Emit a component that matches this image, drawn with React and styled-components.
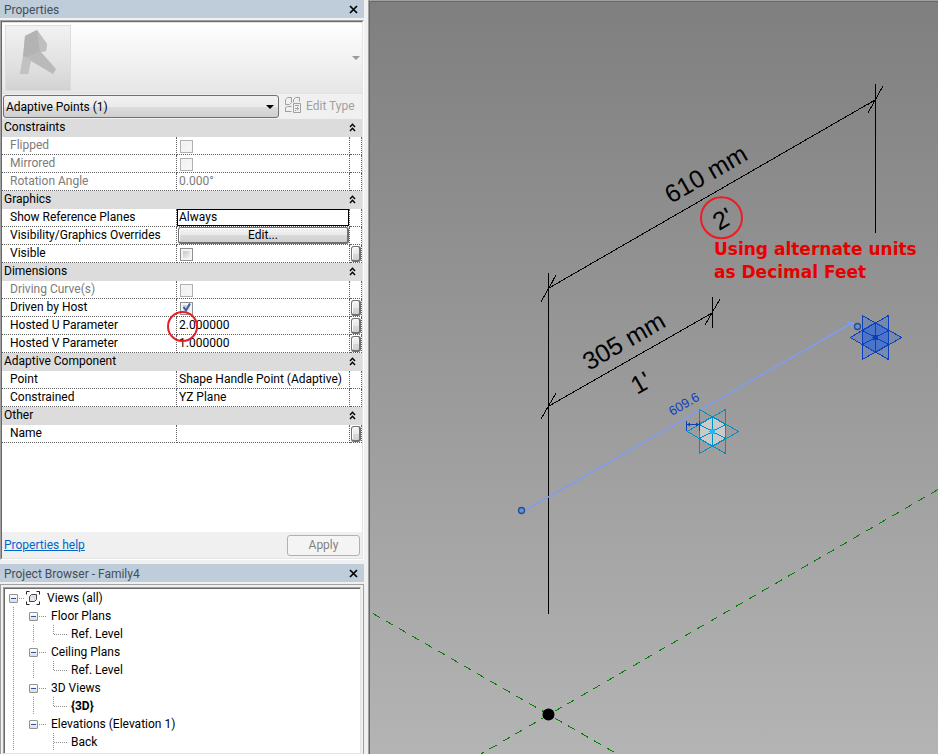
import React from "react";
import styled, { createGlobalStyle, css } from "styled-components";

const uiFont = 'Roboto, "Noto Sans", sans-serif';

const GlobalStyle = createGlobalStyle`
  *, *::before, *::after { box-sizing: border-box; }
  body { margin: 0; background: #f0f0f0; font: 12px/18px ${uiFont}; color: #000; }
  button, input, select { font: inherit; color: inherit; margin: 0; padding: 0; }
`;

const Workspace = styled.div`
  display: flex;
  gap: 4px;
  height: 100vh;
  overflow: hidden;
`;

const Dock = styled.aside`
  flex: 0 0 364px;
  display: flex;
  flex-direction: column;
  gap: 4px;
  min-height: 0;
`;

const Panel = styled.section`
  display: flex;
  flex-direction: column;
  gap: 2px;
  ${(p) => (p.$fill ? "flex: 1 1 0; min-height: 0; overflow: hidden;" : "flex: none;")}
`;

const TitleBar = styled.header`
  display: flex;
  align-items: center;
  justify-content: space-between;
  height: 18px;
  padding: 0 5px 0 4px;
  background: #bfcddb;
  color: #434e5a;
`;

const Title = styled.h2`
  margin: 0;
  padding-top: 2px;
  font-size: 12px;
  font-weight: 400;
`;

const IconButton = styled.button`
  display: flex;
  align-items: center;
  justify-content: center;
  width: 12px;
  height: 14px;
  border: 0;
  background: none;
  color: #000;
`;

const SunkenFrame = styled.div`
  border: 1px solid;
  border-color: #a0a0a0 #fff #fff #a0a0a0;
`;

const SunkenInner = styled.div`
  display: flex;
  flex-direction: column;
  border: 1px solid;
  border-color: #696969 #e3e3e3 #e3e3e3 #696969;
`;

const TypeHeader = styled.div`
  display: flex;
  align-items: center;
  justify-content: space-between;
  height: 72px;
  padding: 2px 0 2px 3px;
  border: 1px solid #e2e2e2;
  border-width: 1px 0;
  background: linear-gradient(#fff, #e6e6e6);
`;

const Thumbnail = styled.svg`
  width: 66px;
  height: 66px;
  border: 1px solid #ddd;
`;

const TypeRow = styled.div`
  display: flex;
  align-items: center;
  gap: 4px;
  height: 25px;
  padding-left: 1px;
`;

const SelectShell = styled.div`
  position: relative;
  width: 276px;

  svg {
    position: absolute;
    right: 5px;
    top: 10px;
    pointer-events: none;
  }
`;

const TypeSelect = styled.select`
  appearance: none;
  width: 100%;
  height: 23px;
  padding: 0 18px 0 2px;
  border: 1px solid #707070;
  border-radius: 3px;
  background: linear-gradient(#f2f2f2, #ebebeb 50%, #ddd 51%, #cfcfcf);
`;

const EditTypeButton = styled.button`
  display: flex;
  align-items: center;
  gap: 4px;
  height: 22px;
  padding: 0 0 2px 2px;
  border: 0;
  background: none;
  color: #a0a0a0;
  &:disabled { color: #a0a0a0; }
`;

const GridArea = styled.div`
  min-height: 413px;
  background: #fff;
`;

const PropertyTable = styled.table`
  width: 100%;
  table-layout: fixed;
  border-spacing: 0;

  td, th { height: 18px; padding: 0; font-weight: 400; text-align: left; line-height: 17px; }
`;

const NameCol = styled.col` width: 175px; `;
const ButtonCol = styled.col` width: 12px; `;

const SectionCell = styled.th`
  background: #dcdcdc;
`;

const SectionBar = styled.div`
  display: flex;
  align-items: center;
  justify-content: space-between;
  height: 18px;
  padding: 0 4px 1px 2px;
`;

const NameCell = styled.th`
  border: 0 dotted #606060;
  border-width: 0 1px 1px 0;

  label { display: block; height: 17px; padding-left: 8px; line-height: 16px; color: ${(p) => (p.$dim ? "#7c7c7c" : "#000")}; }
`;

const ValueCell = styled.td`
  position: relative;
  border: 0 dotted #606060;
  border-width: 0 1px 1px 0;
`;

const ValueInput = styled.input`
  display: block;
  width: 100%;
  height: 17px;
  padding: 0 0 1px 2px;
  border: 0;
  background: none;
  outline: 0;
  line-height: 16px;
  &:disabled { color: #7c7c7c; }
`;

const ValueSelect = styled.select`
  appearance: none;
  display: block;
  width: 100%;
  height: 17px;
  padding: 0 0 1px 1px;
  border: 1px solid #000;
  border-radius: 0;
  background: #fff;
  line-height: 14px;
`;

const raised = css`
  border: 1px solid #707070;
  border-width: 1px 2px 2px 1px;
  border-radius: 3px;
  background: linear-gradient(#f4f4f4, #e9e9e9 50%, #dadada 51%, #d0d0d0);
  box-shadow: inset 1px 1px 0 #fff;
`;

const EditButton = styled.button`
  ${raised}
  display: block;
  width: calc(100% - 1px);
  height: 17px;
  margin-left: 1px;
  line-height: 14px;
`;

const AssociateButton = styled.button`
  ${raised}
  display: block;
  width: 10px;
  height: 16px;
  margin-left: 1px;
`;

const Check = styled.input`
  appearance: none;
  display: block;
  width: 13px;
  height: 13px;
  margin: 2px 0 0 3px;
  border: 1px solid #8e8f8f;
  background: linear-gradient(135deg, #b4bac8, #f0f2f4 80%);
  box-shadow: inset 0 0 0 2px #f4f4f4;
  &:disabled { border-color: #b1b1b1; background: linear-gradient(135deg, #ededed, #fbfbfb); }
`;

const CheckMark = styled.svg`
  position: absolute;
  left: 4px;
  top: 3px;
  pointer-events: none;
`;

const Callout = styled.span`
  position: absolute;
  z-index: 1;
  left: -10px;
  top: -6px;
  width: 31px;
  height: 31px;
  border: 2px solid #ed1c24;
  border-radius: 50%;
  pointer-events: none;
`;

const Footer = styled.footer`
  display: flex;
  align-items: center;
  justify-content: space-between;
  height: 26px;
  padding: 0 2px;
  background: #f0f0f0;
`;

const HelpLink = styled.a`
  color: #0066cc;
  text-decoration: underline;
`;

const ApplyButton = styled.button`
  width: 73px;
  height: 21px;
  border: 1px solid #adb2b5;
  border-radius: 3px;
  background: #f4f4f4;
  &:disabled { color: #838383; }
`;

const BrowserFrame = styled.div`
  flex: 1;
  min-height: 0;
  padding: 2px 2px 0;
  border: 1px solid #a0a0a0;
  border-bottom: 0;
  overflow: hidden;
`;

const BrowserInner = styled.div`
  height: 100%;
  border: 1px solid;
  border-color: #a0a0a0 #e3e3e3 #e3e3e3 #a0a0a0;
  overflow: hidden;
`;

const Tree = styled.ul`
  height: 100%;
  margin: 0;
  padding: 0;
  border: 1px solid #696969;
  border-width: 1px 0 0 1px;
  background: #fff;
  list-style: none;
  overflow: hidden;
`;

const TreeRow = styled.li`
  display: flex;
  align-items: center;
  height: 18px;
  font-weight: ${(p) => (p.$bold ? 700 : 400)};
`;

const Guide = styled.svg`
  flex: none;
  width: ${(p) => p.$w}px;
  height: 18px;
`;

const Twisty = styled.button`
  display: block;
  width: 9px;
  height: 9px;
  margin-top: 1px;
  flex: none;
  border: 1px solid #919191;
  border-radius: 1px;
  background: linear-gradient(#fff, #ddd);

  &::before { content: ""; display: block; width: 5px; height: 1px; margin: 0 auto; background: #2f4fa0; }
`;

const Viewport = styled.main`
  flex: 1;
  min-width: 0;
  border: 1px solid #a0a0a0;
  border-width: 1px 0 0 1px;
  box-shadow: inset 1px 1px 0 #696969;
  background: linear-gradient(#7f7f7f, #b4b4b4);
`;

const Scene = styled.svg`
  display: block;
  width: 100%;
  height: 100%;
`;

const CloseIcon = () => (
  <svg width="9" height="9" viewBox="0 0 9 9" stroke="currentColor" strokeWidth="1.7" aria-hidden="true">
    <path d="M1 1 8 8M8 1 1 8" />
  </svg>
);

const CollapseIcon = () => (
  <svg width="7" height="9" viewBox="0 0 7 9" fill="none" stroke="currentColor" strokeWidth="1.4" aria-hidden="true">
    <path d="M1 4 3.5 1.3 6 4M1 8 3.5 5.3 6 8" />
  </svg>
);

const DownArrow = ({ color }) => (
  <svg width="8" height="4" viewBox="0 0 8 4" fill={color} aria-hidden="true">
    <path d="M0 0H8L4 4Z" />
  </svg>
);

const EditTypeIcon = () => (
  <svg width="17" height="17" viewBox="0 0 17 17" fill="none" stroke="#a0a0a0" aria-hidden="true">
    <path d="M.5 7.5V2.5L2.5.5H6.5V5.5L4.5 7.5ZM8.5 5.5V2.5L10.5.5H14.5V4.5M.5 15V10.5L2.5 9.5H6.5M.5 14.5H6.5" />
    <path d="M8.5 6.5H15.5V15.5H8.5ZM10 8.5H14M10 11.5H13.5M12 10 13.5 11.5 12 13.5M10 13.5H11" />
  </svg>
);

const ViewsIcon = () => (
  <svg width="14" height="14" viewBox="0 0 14 14" fill="none" aria-hidden="true">
    <path d="M.5 3.5V.5H3.5M10.5.5H13.5V3.5M13.5 10.5V13.5H10.5M3.5 13.5H.5V10.5" stroke="#222" />
    <path d="M3.5 5.5 5.5 3.5H10.5V8.5L8.5 10.5H3.5Z" fill="#e4e8ef" stroke="#444" />
    <path d="M4 5.5H8.5V10" stroke="#d3d7df" />
  </svg>
);

const sections = [
  ["Constraints", [
    { name: "Flipped", kind: "check", dim: true },
    { name: "Mirrored", kind: "check", dim: true },
    { name: "Rotation Angle", kind: "text", value: "0.000°", dim: true },
  ]],
  ["Graphics", [
    { name: "Show Reference Planes", kind: "select", value: "Always" },
    { name: "Visibility/Graphics Overrides", kind: "button", value: "Edit..." },
    { name: "Visible", kind: "check", assoc: true },
  ]],
  ["Dimensions", [
    { name: "Driving Curve(s)", kind: "check", dim: true },
    { name: "Driven by Host", kind: "check", checked: true, assoc: true },
    { name: "Hosted U Parameter", kind: "text", value: "2.000000", assoc: true, marked: true },
    { name: "Hosted V Parameter", kind: "text", value: "1.000000", assoc: true },
  ]],
  ["Adaptive Component", [
    { name: "Point", kind: "text", value: "Shape Handle Point (Adaptive)" },
    { name: "Constrained", kind: "text", value: "YZ Plane" },
  ]],
  ["Other", [{ name: "Name", kind: "text", value: "", assoc: true }]],
];

function PropertyValue({ id, row }) {
  if (row.kind === "check")
    return (
      <>
        <Check id={id} type="checkbox" defaultChecked={row.checked} disabled={row.dim} />
        {row.checked && (
          <CheckMark width="11" height="11" viewBox="0 0 11 11" fill="none" stroke="#3a5eaa" strokeWidth="2">
            <path d="M2.5 5 5 8.5 9 1.5" />
          </CheckMark>
        )}
      </>
    );
  if (row.kind === "select")
    return <ValueSelect id={id}><option>{row.value}</option></ValueSelect>;
  if (row.kind === "button") return <EditButton id={id} type="button">{row.value}</EditButton>;
  return <ValueInput id={id} type="text" defaultValue={row.value} disabled={row.dim} />;
}

function PropertyRow({ row }) {
  const id = "prop-" + row.name.toLowerCase().replace(/[^a-z]+/g, "-");
  return (
    <tr>
      <NameCell scope="row" $dim={row.dim}><label htmlFor={id}>{row.name}</label></NameCell>
      <ValueCell>
        <PropertyValue id={id} row={row} />
        {row.marked && <Callout />}
      </ValueCell>
      <ValueCell>
        {row.assoc && <AssociateButton type="button" aria-label={`Associate ${row.name}`} />}
      </ValueCell>
    </tr>
  );
}

function PropertiesPanel() {
  return (
    <Panel>
      <TitleBar>
        <Title>Properties</Title>
        <IconButton type="button" aria-label="Close Properties"><CloseIcon /></IconButton>
      </TitleBar>
      <SunkenFrame>
        <SunkenInner>
          <TypeHeader>
            <Thumbnail viewBox="0 0 64 64" aria-hidden="true">
              <defs>
                <linearGradient id="thumb" x1="0" y1="0" x2="0" y2="1">
                  <stop offset="0" stopColor="#f2f2f2" />
                  <stop offset=".7" stopColor="#dedede" />
                  <stop offset="1" stopColor="#d2d2d2" />
                </linearGradient>
              </defs>
              <rect width="64" height="64" fill="url(#thumb)" />
              <path d="M19 10 31 4 41 18 40 25 35 26 50 43 47 48 25 35 22 48H14L17 32Z" fill="#bababa" />
              <path d="M19 10 31 4 34 25 17 32Z" fill="#b3b3b3" />
              <path d="M31 4 41 18 40 25 34 26Z" fill="#bfbfbf" />
              <path d="M17 30 25 34 22 48H14Z" fill="#c2c2c2" />
            </Thumbnail>
            <IconButton type="button" aria-label="Choose type"><DownArrow color="#9a9a9a" /></IconButton>
          </TypeHeader>
          <TypeRow>
            <SelectShell>
              <TypeSelect aria-label="Selection"><option>Adaptive Points (1)</option></TypeSelect>
              <DownArrow color="#000" />
            </SelectShell>
            <EditTypeButton type="button" disabled><EditTypeIcon />Edit Type</EditTypeButton>
          </TypeRow>
          <GridArea>
            <PropertyTable>
              <colgroup><NameCol /><col /><ButtonCol /></colgroup>
              {sections.map(([title, rows]) => (
                <tbody key={title}>
                  <tr>
                    <SectionCell colSpan={3} scope="rowgroup">
                      <SectionBar>
                        {title}
                        <IconButton type="button" aria-label={`Collapse ${title}`}><CollapseIcon /></IconButton>
                      </SectionBar>
                    </SectionCell>
                  </tr>
                  {rows.map((row) => <PropertyRow key={row.name} row={row} />)}
                </tbody>
              ))}
            </PropertyTable>
          </GridArea>
          <Footer>
            <HelpLink href="#help">Properties help</HelpLink>
            <ApplyButton type="button" disabled>Apply</ApplyButton>
          </Footer>
        </SunkenInner>
      </SunkenFrame>
    </Panel>
  );
}

const views = [
  { level: 1, label: "Floor Plans" },
  { level: 2, label: "Ref. Level", last: true },
  { level: 1, label: "Ceiling Plans" },
  { level: 2, label: "Ref. Level", last: true },
  { level: 1, label: "3D Views" },
  { level: 2, label: "{3D}", bold: true, last: true },
  { level: 1, label: "Elevations (Elevation 1)", lastGroup: true },
  { level: 2, label: "Back", underLast: true },
];

const dots = { stroke: "#909090", strokeDasharray: "1 1", fill: "none" };

function ViewRow({ view }) {
  if (view.level === 1)
    return (
      <TreeRow>
        <Guide $w={24}>
          <path d="M8.5 0V18" {...dots} />
        </Guide>
        <Twisty type="button" aria-label={`Collapse ${view.label}`} />
        <Guide $w={13}><path d="M1 9.5H9" {...dots} /></Guide>
        {view.label}
      </TreeRow>
    );
  return (
    <TreeRow $bold={view.bold}>
      <Guide $w={66}>
        <path d={`M8.5 0V18${view.underLast ? "" : "M28.5 0V18"}M48.5 0V${view.last ? 10 : 18}M49 9.5H63`} {...dots} />
      </Guide>
      {view.label}
    </TreeRow>
  );
}

function ProjectBrowser() {
  return (
    <Panel $fill>
      <TitleBar>
        <Title>Project Browser - Family4</Title>
        <IconButton type="button" aria-label="Close Project Browser"><CloseIcon /></IconButton>
      </TitleBar>
      <BrowserFrame>
        <BrowserInner>
          <Tree>
            <TreeRow>
              <Guide $w={4} />
              <Twisty type="button" aria-label="Collapse Views" />
              <Guide $w={8}><path d="M1 9.5H7" {...dots} /></Guide>
              <ViewsIcon />
              <Guide $w={7} />
              Views (all)
            </TreeRow>
            {views.map((v, i) => <ViewRow key={i} view={v} />)}
          </Tree>
        </BrowserInner>
      </BrowserFrame>
    </Panel>
  );
}

function PointPlanes({ x, y, stroke, fill, core, dot }) {
  return (
    <g transform={`translate(${x} ${y})`} stroke={stroke} fill={fill} shapeRendering="crispEdges">
      <path d="M0-15 13-7V7L0 15-13 7V-7Z" fill={core} stroke="none" />
      <path d="M-25 0 0-15 26 0 0 15Z" />
      <path d="M-13-22 13-7V22L-13 7Z" />
      <path d="M13-22-13-7V22L13 7Z" />
      <path d="M0-15V15M-13-7 13 7M13-7-13 7" />
      <circle r="3" fill={dot} stroke="none" />
    </g>
  );
}

function DimensionText({ x, y, size = 25, fill = "#000", children }) {
  return (
    <text transform={`translate(${x} ${y}) rotate(-30)`} fontFamily='"Liberation Sans", Arial, sans-serif' fontSize={size} fill={fill}>
      {children}
    </text>
  );
}

function ModelView() {
  return (
    <Viewport>
      <Scene viewBox="369 1 569 753" preserveAspectRatio="xMidYMid slice" role="img" aria-label="3D view">
        <g stroke="#008000" strokeDasharray="8 7" shapeRendering="crispEdges">
          <path d="M373 613.5 618 754.5" />
          <path d="M938 489.5 480 754.5" />
        </g>
        <circle cx="548.5" cy="714.5" r="6" />
        <g stroke="#000" fill="none" shapeRendering="crispEdges">
          <path d="M548.5 273V614M875.5 84V233M712.5 297V328" />
          <path d="M549 288 875 100M549 406 712 313" />
          <path d="M541 302 556 275M868 113 883 86M541 419 556 393M705 325 720 299" />
          <path d="M549 288 554 279M875 100 867 105" />
        </g>
        <DimensionText x={671} y={204}>610 mm</DimensionText>
        <DimensionText x={719} y={231}>2'</DimensionText>
        <DimensionText x={589} y={371}>305 mm</DimensionText>
        <DimensionText x={637} y={395}>1'</DimensionText>
        <path d="M524 511 852 323" stroke="#7f9df0" strokeWidth="1.5" />
        <path d="M847 322 853 323 851 328" stroke="#7f9df0" strokeWidth="1.5" fill="none" />
        <PointPlanes x={712.5} y={431.5} stroke="#0090c8" fill="none" core="#cacaca" dot="#19baf5" />
        <PointPlanes x={875.5} y={337.5} stroke="#0a3fc0" fill="#2f66dc48" core="#2f66dc30" dot="#0a3fc0" />
        <path d="M686.5 421V431M699.5 421V431M687 424.5H699" stroke="#0a3fc0" />
        <path d="M687 424.5 690 422.5V426.5ZM699 424.5 696 422.5V426.5Z" fill="#0a3fc0" />
        <DimensionText x={672} y={416} size={13} fill="#0a3fc0">609.6</DimensionText>
        <g fill="#5c94e4" stroke="#2c4c84" strokeWidth="1.3">
          <circle cx="521.5" cy="510.5" r="3" />
          <circle cx="857.5" cy="326.5" r="3" />
        </g>
        <circle cx="721.5" cy="217.8" r="20.5" fill="none" stroke="#ed1c24" strokeWidth="2" />
        <text fontFamily='"DejaVu Sans", Verdana, sans-serif' fontWeight="700" fontSize="17" fill="#e60000">
          <tspan x="714" y="255">Using alternate units</tspan>
          <tspan x="714" y="278">as Decimal Feet</tspan>
        </text>
      </Scene>
    </Viewport>
  );
}

export default function App() {
  return (
    <>
      <GlobalStyle />
      <Workspace>
        <Dock>
          <PropertiesPanel />
          <ProjectBrowser />
        </Dock>
        <ModelView />
      </Workspace>
    </>
  );
}
